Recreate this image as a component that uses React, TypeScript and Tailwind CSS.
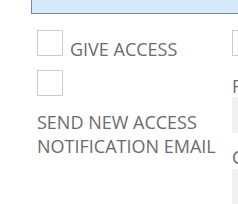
import React from "react";

export default function App() {
  const font = { fontFamily: '"Open Sans", "Noto Sans", sans-serif' };
  return (
    <div className="relative w-[238px] h-[204px] overflow-hidden bg-white" style={font}>
      <div className="ml-[31px] h-[14px] bg-[#d5e9f8] border-l border-b border-[#6f8aa5]" />
      <div className="flex">
        <div className="w-[232px] shrink-0 pl-[37px] pt-[16px] text-[#6b6b6b]">
          <div className="flex items-start">
            <div className="w-[26px] h-[26px] border border-[#cccccc] bg-white shrink-0" />
            <span className="ml-[7px] mt-[7px] text-[18px] leading-[24px] whitespace-nowrap">GIVE ACCESS</span>
          </div>
          <div className="mt-[9px] w-[26px] h-[26px] border border-[#cccccc] bg-white" />
          <div className="mt-[14px] text-[18px] leading-[24px] whitespace-nowrap">
            <div>SEND NEW ACCESS</div>
            <div>NOTIFICATION EMAIL</div>
          </div>
        </div>
        <div className="w-[200px] shrink-0 pt-[16px] text-[#6b6b6b]">
          <div className="w-[26px] h-[26px] border border-[#cccccc] bg-white" />
          <div className="mt-[18px] text-[18px] leading-[24px]">F</div>
          <div className="mt-[-1px] h-[36px] bg-[#f1f1f1]" />
          <div className="mt-[12px] text-[18px] leading-[24px]">C</div>
          <div className="mt-[0px] h-[36px] bg-[#f1f1f1]" />
        </div>
      </div>
    </div>
  );
}
